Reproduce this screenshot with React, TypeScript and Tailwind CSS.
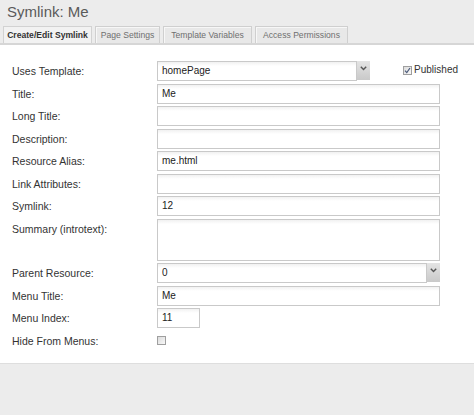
import React from "react";

const font = { fontFamily: '"Liberation Sans", Arial, sans-serif' };

function Chevron() {
  return (
    <svg width="7" height="5" viewBox="0 0 7 5">
      <path d="M0.8 0.8 L3.5 3.6 L6.2 0.8" fill="none" stroke="#555" strokeWidth="1.4" />
    </svg>
  );
}

function TextInput({ value = "", w = "w-[283px]", h = "h-[20px]" }: { value?: string; w?: string; h?: string }) {
  return (
    <div
      className={`${w} ${h} border border-[#c9c9c9] bg-white bg-gradient-to-b from-[#f1f1f1] to-white to-[4px] flex items-start pl-[4px] pt-[3px] text-[10px] text-[#222] leading-[12px]`}
    >
      {value}
    </div>
  );
}

function SelectInput({ value, w }: { value: string; w: string }) {
  return (
    <div className="flex h-[20px]">
      <div
        className={`${w} h-[20px] border border-[#c9c9c9] bg-gradient-to-b from-[#f1f1f1] to-white to-[4px] pl-[4px] pt-[3px] text-[10px] text-[#222] leading-[12px]`}
      >
        {value}
      </div>
      <div className="w-[13px] h-[19px] bg-gradient-to-b from-[#e4e4e4] to-[#c9c9c9] flex items-start justify-center pt-[5px]">
        <Chevron />
      </div>
    </div>
  );
}

function Checkbox({ checked = false }: { checked?: boolean }) {
  return (
    <div className="w-[9px] h-[9px] border border-[#9f9f9f] bg-gradient-to-br from-[#dcdcdc] to-[#f8f8f8] flex items-center justify-center">
      {checked && (
        <svg width="7" height="7" viewBox="0 0 7 7">
          <path d="M1 3.6 L2.8 5.6 L6 1" fill="none" stroke="#4a5a7a" strokeWidth="1.2" />
        </svg>
      )}
    </div>
  );
}

function Row({ label, children, h = "h-[20px]" }: { label: string; children: React.ReactNode; h?: string }) {
  return (
    <div className={`flex ${h}`}>
      <div className="w-[157px] shrink-0 pl-[12px] text-[10.5px] text-[#333] leading-[20px] h-[20px]">{label}</div>
      <div className="flex-1">{children}</div>
    </div>
  );
}

export default function App() {
  const tabs = [
    { t: "Create/Edit Symlink", w: "w-[89px]", active: true },
    { t: "Page Settings", w: "w-[65px]", active: false },
    { t: "Template Variables", w: "w-[89px]", active: false },
    { t: "Access Permissions", w: "w-[93px]", active: false },
  ];
  return (
    <div style={font} className="w-[474px] h-[415px] bg-[#ececec] flex flex-col overflow-hidden">
      <div className="h-[25px] pl-[7px] pt-[3px] text-[15px] leading-[18px] text-[#5a5a5a]">Symlink: Me</div>
      <div className="h-[20px] flex items-end gap-[3px] pl-[3px] border-b-2 border-[#d6d6d6]">
        {tabs.map((tab) => (
          <div
            key={tab.t}
            className={`${tab.w} h-[17px] border border-b-0 text-center text-[8.6px] leading-[16px] ${
              tab.active
                ? "bg-[#f2f2f2] border-[#d2d2d2] font-bold text-[#333]"
                : "bg-[#e8e8e8] border-[#cfcfcf] text-[#6f6f6f] shadow-[inset_1px_1px_0_#f7f7f7]"
            }`}
          >
            {tab.t}
          </div>
        ))}
      </div>
      <div className="h-[318px] bg-white pt-[16px] flex flex-col gap-[2.5px]">
        <Row label="Uses Template:">
          <div className="flex items-start">
            <SelectInput value="homePage" w="w-[200px]" />
            <div className="ml-auto mr-[16px] flex items-center gap-[2px] pt-[3px]">
              <Checkbox checked />
              <span className="text-[10px] text-[#333] leading-[12px]">Published</span>
            </div>
          </div>
        </Row>
        <Row label="Title:">
          <TextInput value="Me" />
        </Row>
        <Row label="Long Title:">
          <TextInput />
        </Row>
        <Row label="Description:">
          <TextInput />
        </Row>
        <Row label="Resource Alias:">
          <TextInput value="me.html" />
        </Row>
        <Row label="Link Attributes:">
          <TextInput />
        </Row>
        <Row label="Symlink:">
          <TextInput value="12" />
        </Row>
        <Row label="Summary (introtext):" h="h-[42px]">
          <TextInput h="h-[42px]" />
        </Row>
        <Row label="Parent Resource:">
          <SelectInput value="0" w="w-[270px]" />
        </Row>
        <Row label="Menu Title:">
          <TextInput value="Me" />
        </Row>
        <Row label="Menu Index:">
          <TextInput value="11" w="w-[43px]" />
        </Row>
        <Row label="Hide From Menus:">
          <div className="pt-[5px]">
            <Checkbox />
          </div>
        </Row>
      </div>
      <div className="flex-1 bg-[#ececec] border-t border-[#dedede]" />
    </div>
  );
}
